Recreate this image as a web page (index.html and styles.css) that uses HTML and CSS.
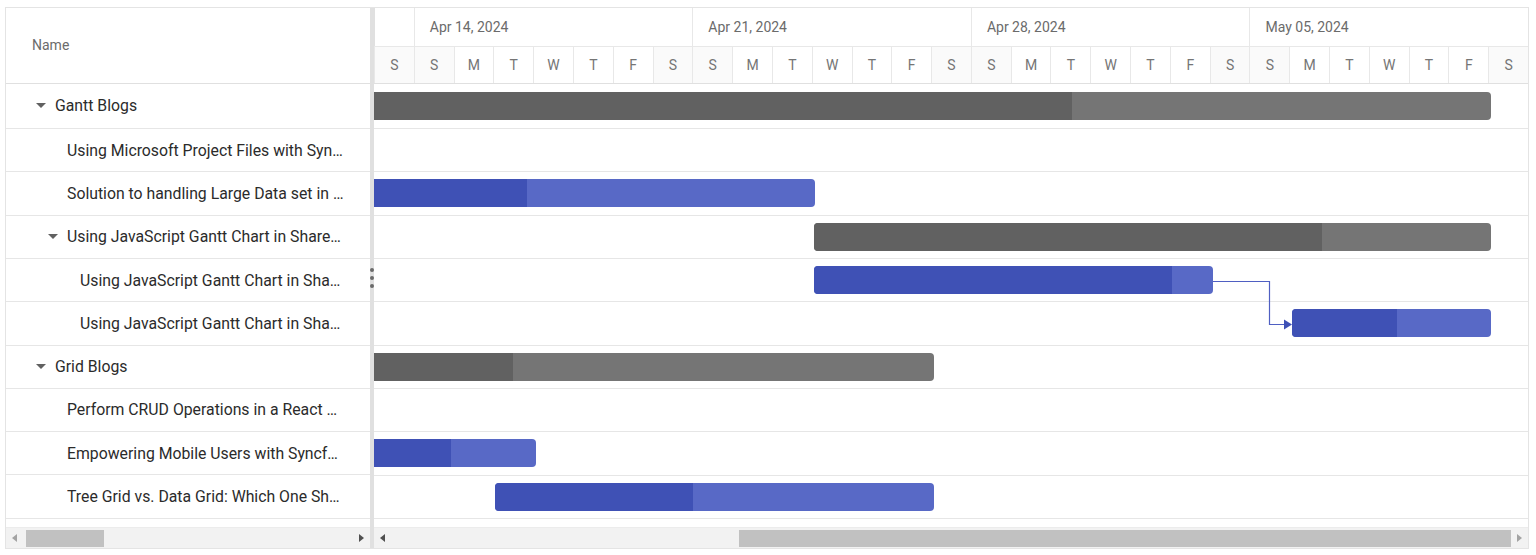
FILE: index.html
```html
<!DOCTYPE html>
<html lang="en">
<head>
    <meta charset="UTF-8">
    <meta name="viewport" content="width=device-width, initial-scale=1.0">
    <title>Gantt Chart</title>
    <link rel="stylesheet" href="styles.css">
</head>
<body>
    <div class="gantt">
        <!-- tree grid -->
        <div class="grid-pane">
            <div class="grid-header">Name</div>
            <div class="grid-body">
                <div class="grid-row lvl-0"><span class="tree-icon"></span><span class="cell-text">Gantt Blogs</span></div>
                <div class="grid-row lvl-1"><span class="tree-icon none"></span><span class="cell-text">Using Microsoft Project Files with Syncfusion JavaScript Gantt Chart</span></div>
                <div class="grid-row lvl-1"><span class="tree-icon none"></span><span class="cell-text">Solution to handling Large Data set in JavaScript Gantt Chart</span></div>
                <div class="grid-row lvl-1"><span class="tree-icon"></span><span class="cell-text">Using JavaScript Gantt Chart in SharePoint</span></div>
                <div class="grid-row lvl-2"><span class="tree-icon none"></span><span class="cell-text">Using JavaScript Gantt Chart in SharePoint Online</span></div>
                <div class="grid-row lvl-2"><span class="tree-icon none"></span><span class="cell-text">Using JavaScript Gantt Chart in SharePoint Server</span></div>
                <div class="grid-row lvl-0"><span class="tree-icon"></span><span class="cell-text">Grid Blogs</span></div>
                <div class="grid-row lvl-1"><span class="tree-icon none"></span><span class="cell-text">Perform CRUD Operations in a React Data Grid</span></div>
                <div class="grid-row lvl-1"><span class="tree-icon none"></span><span class="cell-text">Empowering Mobile Users with Syncfusion Grid</span></div>
                <div class="grid-row lvl-1"><span class="tree-icon none"></span><span class="cell-text">Tree Grid vs. Data Grid: Which One Should You Choose</span></div>
            </div>
            <div class="hscroll">
                <span class="scroll-btn"><span class="arrow left off"></span></span>
                <div class="scroll-track"><div class="scroll-thumb grid-thumb"></div></div>
                <span class="scroll-btn"><span class="arrow right"></span></span>
            </div>
        </div>

        <div class="splitter">
            <span class="dot"></span>
            <span class="dot"></span>
            <span class="dot"></span>
        </div>

        <!-- chart side -->
        <div class="chart-pane">
            <div class="timeline">
                <div class="tier top-tier">
                    <div class="week"></div>
                    <div class="week">Apr 14, 2024</div>
                    <div class="week">Apr 21, 2024</div>
                    <div class="week">Apr 28, 2024</div>
                    <div class="week">May 05, 2024</div>
                </div>
                <div class="tier bottom-tier" id="days"></div>
            </div>
            <div class="chart-body">
                <div class="chart-row"><div class="bar parent" style="margin-left:-4px;width:1121px"><div class="progress" style="width:702px"></div></div></div>
                <div class="chart-row"></div>
                <div class="chart-row"><div class="bar" style="margin-left:-4px;width:445px"><div class="progress" style="width:157px"></div></div></div>
                <div class="chart-row"><div class="bar parent" style="margin-left:440px;width:677px"><div class="progress" style="width:508px"></div></div></div>
                <div class="chart-row"><div class="bar" style="margin-left:440px;width:399px"><div class="progress" style="width:358px"></div></div></div>
                <div class="chart-row"><div class="bar" style="margin-left:918px;width:199px"><div class="progress" style="width:105px"></div></div></div>
                <div class="chart-row"><div class="bar parent" style="margin-left:-4px;width:564px"><div class="progress" style="width:143px"></div></div></div>
                <div class="chart-row"></div>
                <div class="chart-row"><div class="bar" style="margin-left:-4px;width:166px"><div class="progress" style="width:81px"></div></div></div>
                <div class="chart-row"><div class="bar" style="margin-left:121px;width:439px"><div class="progress" style="width:198px"></div></div></div>

                <svg class="connectors" width="1154" height="445">
                    <polyline points="839,197.5 895.5,197.5 895.5,240.5 911,240.5" fill="none" stroke="#4f5fc2" stroke-width="1.2"/>
                    <polygon points="910,235.5 918,240.5 910,245.5" fill="#3f51b5"/>
                </svg>
            </div>
            <div class="hscroll">
                <span class="scroll-btn"><span class="arrow left"></span></span>
                <div class="scroll-track"><div class="scroll-thumb chart-thumb"></div></div>
                <span class="scroll-btn"><span class="arrow right off"></span></span>
            </div>
        </div>
    </div>

    <script>
        // day cells, Sat Apr 13 to Sat May 11
        const days = document.getElementById('days');
        const letters = ['S', 'S', 'M', 'T', 'W', 'T', 'F'];
        for (let i = 0; i < 29; i++) {
            const cell = document.createElement('div');
            const letter = letters[i % 7];
            cell.className = letter === 'S' ? 'day weekend' : 'day';
            cell.textContent = letter;
            days.appendChild(cell);
        }
    </script>
</body>
</html>
```

FILE: styles.css
```css
body {
    margin: 0;
    padding: 0;
    font-family: Roboto, "Liberation Sans", Arial, sans-serif;
    background-color: #ffffff;
    color: #2b2b2b;
}
.gantt {
    display: flex;
    width: 1524px;
    height: 542px;
    margin: 7px 0 0 5px;
    border: 1px solid #e4e4e4;
    box-sizing: border-box;
    overflow: hidden;
}
.grid-pane {
    width: 364px;
    display: flex;
    flex-direction: column;
    flex-shrink: 0;
}
.grid-header {
    height: 76px;
    box-sizing: border-box;
    border-bottom: 1px solid #e0e0e0;
    display: flex;
    align-items: center;
    padding-left: 26px;
    font-size: 14px;
    color: #6b6b6b;
}
.grid-body,
.chart-body {
    height: 444px;
    overflow: hidden;
    position: relative;
}
.grid-row {
    height: 43.33px;
    box-sizing: border-box;
    border-bottom: 1px solid #e6e6e6;
    display: flex;
    align-items: center;
    padding: 0 26px 0 30px;
    font-size: 15.8px;
}
.grid-row:first-child,
.chart-row:first-child {
    height: 45px;
}
.grid-row.lvl-1 {
    padding-left: 42px;
}
.grid-row.lvl-2 {
    padding-left: 55px;
}
.tree-icon {
    width: 0;
    height: 0;
    border-left: 5px solid transparent;
    border-right: 5px solid transparent;
    border-top: 5px solid #616161;
    margin-right: 9px;
    flex-shrink: 0;
}
.tree-icon.none {
    border-top-color: transparent;
}
.cell-text {
    white-space: nowrap;
    overflow: hidden;
    text-overflow: ellipsis;
    min-width: 0;
}
.splitter {
    width: 4px;
    flex-shrink: 0;
    background-color: #e0e0e0;
    display: flex;
    flex-direction: column;
    align-items: center;
    justify-content: center;
    gap: 4px;
}
.splitter .dot {
    width: 4px;
    height: 4px;
    border-radius: 50%;
    background-color: #6a6a6a;
}
.chart-pane {
    flex: 1;
    min-width: 0;
    display: flex;
    flex-direction: column;
}
.timeline {
    height: 76px;
    box-sizing: border-box;
    border-bottom: 1px solid #e0e0e0;
    display: flex;
    flex-direction: column;
}
.tier {
    display: grid;
    height: 38px;
}
.top-tier {
    grid-template-columns: 1fr 7fr 7fr 7fr 7fr;
}
.bottom-tier {
    grid-template-columns: repeat(29, 1fr);
    height: 37px;
}
.week {
    border-left: 1px solid #e8e8e8;
    display: flex;
    align-items: center;
    padding-left: 15px;
    font-size: 14px;
    color: #6b6b6b;
}
.week:first-child {
    border-left: 1px solid #e0e0e0;
}
.day {
    border-left: 1px solid #e8e8e8;
    border-top: 1px solid #e8e8e8;
    display: flex;
    align-items: center;
    justify-content: center;
    font-size: 14px;
    color: #757575;
}
.day.weekend {
    background-color: #fafafa;
}
.chart-row {
    height: 43.33px;
    box-sizing: border-box;
    border-bottom: 1px solid #e6e6e6;
    display: flex;
    align-items: center;
}
.bar {
    height: 28px;
    flex-shrink: 0;
    border-radius: 4px;
    background-color: #5869c6;
    overflow: hidden;
    display: flex;
}
.bar .progress {
    height: 100%;
    background-color: #3f51b5;
}
.bar.parent {
    background-color: #757575;
}
.bar.parent .progress {
    background-color: #616161;
}
.connectors {
    position: absolute;
    top: 0;
    left: 0;
    pointer-events: none;
}
.hscroll {
    height: 20px;
    display: flex;
    align-items: stretch;
    background-color: #f2f2f2;
    border-top: 1px solid #ececec;
}
.scroll-btn {
    width: 17px;
    flex-shrink: 0;
    display: flex;
    align-items: center;
    justify-content: center;
}
.arrow {
    width: 0;
    height: 0;
    border-top: 4px solid transparent;
    border-bottom: 4px solid transparent;
}
.arrow.left {
    border-right: 5px solid #505050;
}
.arrow.right {
    border-left: 5px solid #505050;
}
.arrow.left.off {
    border-right-color: #a3a3a3;
}
.arrow.right.off {
    border-left-color: #a3a3a3;
}
.scroll-track {
    flex: 1;
    display: flex;
    align-items: center;
}
.scroll-thumb {
    height: 17px;
    background-color: #c1c1c1;
}
.grid-thumb {
    margin-left: 3px;
    width: 78px;
}
.chart-thumb {
    margin-left: 348px;
    width: 772px;
}
```
